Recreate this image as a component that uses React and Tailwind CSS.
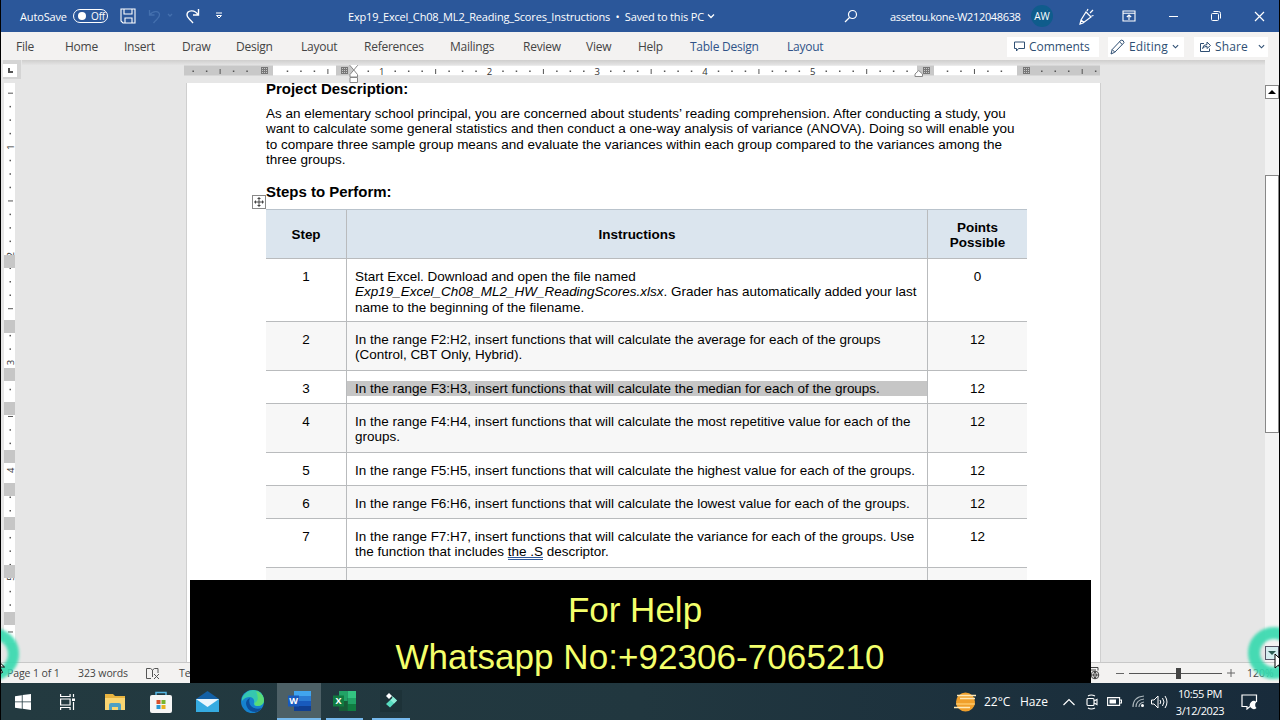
import React from "react";

const T = "whitespace-nowrap leading-none";

const Row = ({ n, pts, h, alt, children }) => (
  <div className={`grid grid-cols-[81px_581px_99px] border-b border-[#b9bbbd] text-[13.47px] leading-[15.45px] ${h} ${alt ? "bg-[#f7f7f7]" : "bg-white"}`}>
    <div className="border-r border-[#b9bbbd] pt-[9.6px] text-center">{n}</div>
    <div className="border-r border-[#b9bbbd] pt-[9.6px] whitespace-nowrap">{children}</div>
    <div className="pt-[9.6px] text-center">{pts}</div>
  </div>
);

const Line = ({ children }) => <div className="pl-[8px]">{children}</div>;

function HRuler() {
  const marks = [];
  for (let k = -6; k <= 61; k++) {
    const x = 274 + k * 13.47 - 184;
    if ([-1, 0, 5, 6, 48, 49, 55, 56].includes(k)) continue;
    if (k % 8 === 0)
      marks.push(<text key={k} x={x} y="9.5" fontSize="9.5" textAnchor="middle" fill="#333" fontFamily="Open Sans">{k / 8}</text>);
    else if (((k % 8) + 8) % 8 === 4) marks.push(<rect key={k} x={x - 0.5} y="4" width="1" height="5" fill="#555" />);
    else marks.push(<rect key={k} x={x - 0.75} y="5.5" width="1.5" height="1.5" fill="#555" />);
  }
  const hatch = (x) => (
    <g key={x} stroke="#777" strokeWidth="1">
      <path d={`M${x} 2.5h7M${x} 4.5h7M${x} 6.5h7M${x} 8.5h7M${x + 0.5} 2v7M${x + 2.5} 2v7M${x + 4.5} 2v7M${x + 6.5} 2v7`} />
    </g>
  );
  return (
    <svg width="916" height="19" viewBox="0 0 916 19" className="block">
      <rect width="916" height="10" fill="#c8c8c8" y="0.5" />
      <rect x="89" width="63" height="10" y="0.5" fill="#fff" />
      <rect x="169" width="564" height="10" y="0.5" fill="#fff" />
      <rect x="750" width="83" height="10" y="0.5" fill="#fff" />
      {marks}
      {hatch(77)}
      {hatch(157)}
      {hatch(739)}
      {hatch(839)}
      <g fill="#fff" stroke="#888">
        <path d="M166 -1.500h7.500v2l-3.700 4.500l-3.800-4.500z" />
        <path d="M166 12v-2.500l3.800-4.500l3.700 4.500v2.500zM166 12.500h7.500v5h-7.500z" />
        <path d="M731 11.500v-2.500l3.700-3.500l3.800 3.500v2.500z" />
      </g>
    </svg>
  );
}

function VRuler() {
  const marks = [];
  for (let k = 4; k <= 44; k++) {
    const y = 39.3 + k * 13.47 - 83;
    if (k % 8 === 0)
      marks.push(<text key={k} transform={`translate(9.500 ${y}) rotate(-90)`} fontSize="9.5" textAnchor="middle" fill="#333" fontFamily="Open Sans">{k / 8}</text>);
    else if (k % 8 === 4) marks.push(<rect key={k} x="4" y={y - 0.5} width="5" height="1" fill="#555" />);
    else marks.push(<rect key={k} x="5.500" y={y - 0.75} width="1.500" height="1.500" fill="#555" />);
  }
  return (
    <svg width="11" height="560" viewBox="0 0 11 560" className="block">
      <rect width="11" height="560" fill="#fff" />
      {marks}
      {[255, 320, 368, 402, 450, 483, 517, 565, 612].map((y) => (
        <rect key={y} y={y - 83} width="11" height="13" fill="#c6c6c6" />
      ))}
    </svg>
  );
}

const Chev = ({ c = "#fff", s = 8 }) => (
  <svg width={s} height={s} viewBox="0 0 8 8" fill="none" stroke={c} strokeWidth="1.300"><path d="M1 2.500l3 3l3-3" /></svg>
);

const Cursor = () => (
  <svg width="14" height="19" viewBox="0 0 14 19" className="block"><path d="M1 1v14l3.500-3l2.500 5.500l2.500-1l-2.500-5.500h4.500z" fill="#fff" stroke="#000" /></svg>
);

const tabs = [
  ["File", "w-[18px] ml-[15px]"], ["Home", "w-[33px] ml-[31px]"], ["Insert", "w-[31px] ml-[26px]"], ["Draw", "w-[28px] ml-[27px]"],
  ["Design", "w-[37px] ml-[26px]"], ["Layout", "w-[36px] ml-[28px]"], ["References", "w-[60px] ml-[27px]"], ["Mailings", "w-[46px] ml-[26px]"],
  ["Review", "w-[38px] ml-[27px]"], ["View", "w-[25px] ml-[25px]"], ["Help", "w-[25px] ml-[27px]"],
  ["Table Design", "w-[70px] ml-[27px] text-[#2f5288]"], ["Layout", "w-[36px] ml-[27px] text-[#2f5288]"],
];

export default function App() {
  return (
    <div className="relative flex h-[720px] w-[1280px] flex-col overflow-hidden border-x border-black bg-[#e6e6e6] font-['Open_Sans',sans-serif] text-[#444]">
      <header className="flex h-8 shrink-0 items-center bg-[#2b579a] text-[11px] tracking-[-0.15px] text-white">
        <span className={`ml-[19px] w-[53px] ${T}`}>AutoSave</span>
        <span className="flex h-[14px] w-[35px] items-center gap-[5px] rounded-full border border-white pl-1 text-[10px] leading-none">
          <i className="block size-2 rounded-full bg-white" />Off
        </span>
        <svg className="ml-[12px]" width="16" height="16" viewBox="0 0 16 16" fill="none" stroke="#fff" strokeWidth="1.100"><path d="M1 1h14v14h-12l-2-2zM4 1v5h8v-5M5 15v-5h7v5" /></svg>
        <svg className="ml-[12px]" width="28" height="16" viewBox="0 0 28 16" fill="none" stroke="#4470ae" strokeWidth="1.300"><path d="M1.500 2v5h5M1.500 7c4-5 10-4 10 0c0 3-3 4-6 8M20 6l2 2l2-2" /></svg>
        <svg className="ml-[9px]" width="15" height="16" viewBox="0 0 15 16" fill="none" stroke="#fff" strokeWidth="1.400"><path d="M13.500 1v6h-5.500M13 7c-3-6-11-5-11 0c0 3 3 4 6 8" /></svg>
        <svg className="ml-[15px]" width="8" height="8" viewBox="0 0 8 8" fill="none" stroke="#fff"><path d="M1 1h6M1.500 3.500l2.500 2.500l2.500-2.500z" /></svg>
        <span className={`ml-[125px] w-[359px] tracking-[-0.17px] ${T}`}>Exp19_Excel_Ch08_ML2_Reading_Scores_Instructions&nbsp; •&nbsp; Saved to this PC</span>
        <Chev />
        <svg className="ml-[129px]" width="14" height="14" viewBox="0 0 14 14" fill="none" stroke="#fff" strokeWidth="1.200"><circle cx="8.500" cy="5.500" r="4" /><path d="M5.500 8.500l-4.500 4.500" /></svg>
        <span className={`ml-[32px] w-[131px] tracking-[-0.35px] ${T}`}>assetou.kone-W212048638</span>
        <span className="ml-[10px] flex size-[22px] items-center justify-center rounded-full bg-[#0f5c8c] text-[10px]">AW</span>
        <svg className="ml-[25px]" width="17" height="17" viewBox="0 0 17 17" fill="none" stroke="#fff" strokeWidth="1.200"><path d="M8 4l5 5l-8 6l-3 1l1-4zM3 12l3 2.500M9 3l1-2M12 5l3-3M13.500 8l2-.5" /></svg>
        <svg className="ml-[27px]" width="14" height="12" viewBox="0 0 14 12" fill="none" stroke="#fff" strokeWidth="1.100"><path d="M1 1h12v10h-12zM1 3.200h12M7 10v-5M4.800 7l2.200-2l2.200 2" /></svg>
        <i className="ml-[33px] block h-px w-[9px] bg-white" />
        <svg className="ml-[33px]" width="10" height="10" viewBox="0 0 10 10" fill="none" stroke="#fff"><rect x=".5" y="2.500" width="7" height="7" rx="1" /><path d="M2.500 .5h5q2 0 2 2v5" /></svg>
        <svg className="ml-[33px]" width="11" height="11" viewBox="0 0 11 11" stroke="#fff" strokeWidth="1.200"><path d="M1 1l9 9M10 1l-9 9" /></svg>
      </header>

      <nav className="flex h-7 shrink-0 items-center bg-[#f3f2f1] pt-px text-[12px] tracking-[-0.25px]">
        {tabs.map(([t, c], i) => <span key={i} className={`${T} ${c}`}>{t}</span>)}
        <button className="ml-[184px] flex h-5 w-[92px] items-center gap-1 bg-white pl-[7px] text-[12px] text-[#2f4f73]">
          <svg width="11" height="11" viewBox="0 0 11 11" fill="none" stroke="currentColor"><path d="M.5 1h10v6.500h-6l-2 2.500v-2.500h-2z" /></svg>
          <span className={`tracking-[-0.05px] ${T}`}>Comments</span>
        </button>
        <button className="ml-[9px] flex h-5 w-[76px] items-center gap-[4px] bg-white pl-[2px] text-[12px] text-[#2f4f73]">
          <svg width="15" height="16" viewBox="0 0 15 16" fill="none" stroke="currentColor"><path d="M1 15l1.200-4.500l9-9.500q2.500 0 2.800 2.700l-9.200 9.500zM9.500 2.800l2.800 2.700M2.200 10.500l2.600 2.700" /></svg>
          <span className={`tracking-[0.1px] ${T}`}>Editing</span><Chev c="#2f4f73" s={7} />
        </button>
        <button className="ml-[10px] flex h-5 w-[74px] items-center gap-1 bg-white pl-[6px] text-[12px] text-[#2f4f73]">
          <svg width="11" height="11" viewBox="0 0 11 11" fill="none" stroke="currentColor"><path d="M4 2.500h-3.500v8h9v-3M2.500 7.500q.5-4 4.500-4v-2.500l3.500 3.500l-3.500 3v-2.200q-2.500 0-4.500 2.200z" /></svg>
          <span className={`tracking-[0.1px] ${T}`}>Share</span><span className="ml-[6px] flex"><Chev c="#2f4f73" s={7} /></span>
        </button>
      </nav>

      <main className="flex h-[602px] shrink-0">
        <div className="flex w-[21px] shrink-0 flex-col pl-[2px]">
          <div className="mb-[4px] h-[19px] w-[18px] bg-[#d4d4d4] pt-[4px]">
            <div className="flex h-[13px] w-[14px] items-center justify-center bg-white"><i className="block h-[5px] w-[5px] border-b-2 border-l-2 border-[#555]" /></div>
          </div>
          <div className="pl-[1px]"><VRuler /></div>
        </div>
        <div className="flex flex-1 flex-col">
          <div className="h-[5px] shrink-0 bg-gradient-to-b from-[#cfcecd] to-[#e4e4e4]" />
          <div className="h-[18px] shrink-0 pl-[162px]"><HRuler /></div>
          <article className="ml-[164px] w-[915px] flex-1 overflow-hidden border-x border-[#cfcfcf] bg-white pl-[79px] font-['Liberation_Sans',Arial,sans-serif] text-black">
            <h2 className="-mt-[3px] h-[26px] text-[14.97px] font-bold leading-[17px]">Project Description:</h2>
            <div className="h-[76px] whitespace-nowrap text-[13.49px] leading-[15.4px]">
              <div>As an elementary school principal, you are concerned about students’ reading comprehension. After conducting a study, you</div>
              <div>want to calculate some general statistics and then conduct a one-way analysis of variance (ANOVA). Doing so will enable you</div>
              <div>to compare three sample group means and evaluate the variances within each group compared to the variances among the</div>
              <div>three groups.</div>
            </div>
            <h2 className="relative h-[27px] text-[14.97px] font-bold leading-[19px]">
              Steps to Perform:
              <span className="absolute -left-[14px] top-[13px] flex size-[14px] items-center justify-center border border-[#888] bg-white">
                <svg width="10" height="10" viewBox="0 0 10 10" fill="none" stroke="#444"><path d="M5 0v10M0 5h10M3.500 1.500h3M3.500 8.500h3M1.500 3.500v3M8.500 3.500v3" /></svg>
              </span>
            </h2>
            <div className="w-[761px] border-t border-[#b9c3cc]">
              <div className="grid h-[49px] grid-cols-[81px_581px_99px] items-stretch border-b border-[#b9bbbd] bg-[#dbe5ee] text-center text-[13.47px] font-bold leading-[15.4px]">
                <div className="flex items-center justify-center border-r border-[#b9bbbd] pt-[2px]">Step</div>
                <div className="flex items-center justify-center border-r border-[#b9bbbd] pt-[2px]">Instructions</div>
                <div className="flex items-center justify-center pt-[2px]">Points<br />Possible</div>
              </div>
              <Row n="1" pts="0" h="h-[63px]"><Line>Start Excel. Download and open the file named</Line><Line><i>Exp19_Excel_Ch08_ML2_HW_ReadingScores.xlsx</i>. Grader has automatically added your last</Line><Line>name to the beginning of the filename.</Line></Row>
              <Row n="2" pts="12" h="h-[49px]" alt><Line>In the range F2:H2, insert functions that will calculate the average for each of the groups</Line><Line>(Control, CBT Only, Hybrid).</Line></Row>
              <Row n="3" pts="12" h="h-[33px]"><div className="h-[15px] bg-[#c6c6c6]"><Line>In the range F3:H3, insert functions that will calculate the median for each of the groups.</Line></div></Row>
              <Row n="4" pts="12" h="h-[49px]" alt><Line>In the range F4:H4, insert functions that will calculate the most repetitive value for each of the</Line><Line>groups.</Line></Row>
              <Row n="5" pts="12" h="h-[33px]"><Line>In the range F5:H5, insert functions that will calculate the highest value for each of the groups.</Line></Row>
              <Row n="6" pts="12" h="h-[33px]" alt><Line>In the range F6:H6, insert functions that will calculate the lowest value for each of the groups.</Line></Row>
              <Row n="7" pts="12" h="h-[49px]"><Line>In the range F7:H7, insert functions that will calculate the variance for each of the groups. Use</Line><Line>the function that includes <span className="border-b border-[#2b579a] underline decoration-[#2b579a]">the .S</span> descriptor.</Line></Row>
              <Row h="h-[49px]" alt />
            </div>
          </article>
        </div>
        <div className="flex w-[14px] shrink-0 flex-col bg-[#f3f3f3] pt-[25px]">
          <div className="flex h-[14px] items-center justify-center border border-[#888] bg-white"><i className="block border-x-[4px] border-b-[4px] border-x-transparent border-b-black" /></div>
          <div className="mt-[76px] h-[258px] border border-[#888] bg-white" />
          <div className="mt-[213px] flex h-[14px] items-center justify-center border border-[#556] bg-[#d5eef0]"><i className="block border-x-[4px] border-t-[4px] border-x-transparent border-t-[#2b5a52]" /></div>
        </div>
      </main>

      <footer className="flex h-[21px] shrink-0 items-center border-t border-[#c8c8c8] bg-[#f3f2f1] text-[10.5px]">
        <span className={`ml-[6px] w-[53px] tracking-[-0.1px] ${T}`}>Page 1 of 1</span>
        <span className={`ml-[18px] w-[51px] tracking-[-0.1px] ${T}`}>323 words</span>
        <svg className="ml-[17px]" width="14" height="13" viewBox="0 0 14 13" fill="none" stroke="#555"><path d="M5 11.500h-4.500v-10h4l2 1.500l2-1.500h3.500v4.500M6.500 3v7M8 7l5 5M13 7l-5 5" /></svg>
        <span className={`ml-[19px] w-[60px] ${T}`}>Text</span>
        <svg className="ml-[851px]" width="10" height="14" viewBox="0 0 10 14" fill="none" stroke="#444"><path d="M0 1.500h8v3M0 4h6" /><circle cx="5" cy="9" r="3.800" /><path d="M1.200 9h7.600M5 5.200q-3 3.800 0 7.600q3-3.800 0-7.600" /></svg>
        <i className="ml-[16px] block h-px w-[8px] bg-[#666]" />
        <span className="ml-[5px] flex h-[11px] w-[93px] items-center"><i className="block h-px w-[47px] bg-[#555]" /><i className="block h-[11px] w-[5px] bg-[#444]" /><i className="block h-px flex-1 bg-[#555]" /></span>
        <svg className="ml-[5px]" width="8" height="8" viewBox="0 0 8 8" stroke="#666"><path d="M0 4h8M4 0v8" /></svg>
        <span className={`ml-[12px] ${T}`}>120%</span>
      </footer>

      <div className="flex h-[37px] shrink-0 items-center bg-gradient-to-r from-[#233a40] via-[#21373f] to-[#182b3b] text-[12px] text-white">
        <svg className="ml-[14px]" width="16" height="16" viewBox="0 0 16 16" fill="#fff"><path d="M0 2.200l6.800-1v6.300h-6.800zM7.600 1.100l8.400-1.100v7.500h-8.400zM0 8.300h6.800v6.400l-6.800-1zM7.600 8.300h8.400v7.700l-8.400-1.200z" /></svg>
        <svg className="ml-[29px]" width="16" height="16" viewBox="0 0 16 16" fill="none" stroke="#fff" strokeWidth="1.200"><path d="M.6 0v2.500h9.500v-2.500M.6 5h9.500v6h-9.500zM.6 16v-2.500h9.500v2.500M13.500 0v3M13.500 8v8" /><path d="M12 4.500h3v2.500h-3z" fill="#fff" stroke="none" /></svg>
        <svg className="ml-[29px]" width="21" height="18" viewBox="0 0 21 18"><path d="M0 1h8l2 2h10v14h-20z" fill="#e8b440" /><path d="M0 5h20v12h-20z" fill="#fad571" /><path d="M4 17v-5q0-2 2-2h8q2 0 2 2v5h-3v-3h-6v3z" fill="#4e9fc4" /></svg>
        <svg className="ml-[24px]" width="22" height="22" viewBox="0 0 22 22"><path d="M6 6v-4.500h10v4.500" fill="none" stroke="#55b7e4" strokeWidth="1.500" /><rect y="4" width="22" height="18" rx="2" fill="#f5f5f5" /><path d="M6.500 9h4v4h-4z" fill="#d8502c" /><path d="M11.500 9h4v4h-4z" fill="#79b52c" /><path d="M6.500 14h4v4h-4z" fill="#2897d4" /><path d="M11.500 14h4v4h-4z" fill="#e9b220" /></svg>
        <svg className="ml-[24px]" width="23" height="21" viewBox="0 0 23 21"><path d="M0 8l11.500-8l11.500 8v3h-23z" fill="#1360a5" /><path d="M0 8h23v13h-23z" fill="#35abe1" /><path d="M0 8h23l-11.500 8z" fill="#eaf6fd" /></svg>
        <svg className="ml-[22px]" width="23" height="23" viewBox="0 0 23 23"><circle cx="11.500" cy="11.500" r="11.500" fill="#1582cf" /><path d="M1 8q4-8 11-8q10 0 11 10q0 6-7 6q-4 0-3-3q1-5-4-6q-5 0-8 4z" fill="#36c7b0" /><path d="M15 1q8 3 8 10q-1 5-7 5q-3-1-2-3q5-3 1-12z" fill="#5bdc76" /><path d="M9 8q-6 3-3 9q2 5 9 5q4-1 6-4q-7 2-11-2q-3-4-1-8z" fill="#0d4f9b" /></svg>
        <div className="ml-[13px] flex h-full w-[44px] items-center justify-center border-b-2 border-[#76b9ed] bg-[#4d6066]">
          <svg width="23" height="20" viewBox="0 0 23 20"><path d="M6 0h17v5h-17z" fill="#41a5ee" /><path d="M6 5h17v5h-17z" fill="#2b7cd3" /><path d="M6 10h17v5h-17z" fill="#185abd" /><path d="M6 15h17v5h-17z" fill="#103f91" /><rect y="4.500" width="11" height="11" fill="#185abd" /><text x="5.500" y="13.200" fontSize="9" fontWeight="700" textAnchor="middle" fill="#fff" fontFamily="Open Sans">W</text></svg>
        </div>
        <div className="ml-[5px] flex h-full w-[37px] items-center justify-center border-b-2 border-[#76b9ed]">
          <svg width="23" height="20" viewBox="0 0 23 20"><path d="M6 0h8.500v10h-8.500z" fill="#21a366" /><path d="M14.500 0h8.500v7h-8.500z" fill="#33c481" /><path d="M14.500 7h8.500v6h-8.500z" fill="#21a366" /><path d="M6 10h8.500v10h-8.500z" fill="#185c37" /><path d="M14.500 13h8.500v7h-8.500z" fill="#107c41" /><rect y="4.500" width="11" height="11" fill="#107c41" /><text x="5.500" y="13.200" fontSize="9" fontWeight="700" textAnchor="middle" fill="#fff" fontFamily="Open Sans">X</text></svg>
        </div>
        <div className="ml-[9px] flex h-full w-[38px] items-center justify-center border-b-2 border-[#76b9ed]">
          <span className="flex size-[22px] items-center justify-center bg-[#1d3238]"><svg width="13" height="15" viewBox="0 0 13 15"><path d="M4 0l3 3l-3 3l-3-3z" fill="#fff" /><path d="M8.500 4l3.500 3.500l-7 7l-4-3.500z" fill="#58dcc0" /><path d="M6.500 2.500l5.500 5l-3 3l-3.500-3.500l2-2z" fill="#8fecd6" /></svg></span>
        </div>
        <svg className="ml-[544px]" width="23" height="20" viewBox="0 0 23 20"><circle cx="11.500" cy="10" r="9.500" fill="#f0a02c" /><path d="M3 3.500h19M6 6.500h15M0 15.500h16" stroke="#ffe9b8" strokeWidth="1.400" /><path d="M2 12h19" stroke="#ffd073" strokeWidth="1.300" /></svg>
        <span className={`ml-[7px] w-[28px] ${T}`}>22°C</span>
        <span className={`ml-[8px] w-[28px] ${T}`}>Haze</span>
        <svg className="ml-[15px]" width="12" height="8" viewBox="0 0 12 8" fill="none" stroke="#fff" strokeWidth="1.200"><path d="M.5 7l5.500-5.500l5.500 5.500" /></svg>
        <svg className="ml-[11px]" width="12" height="16" viewBox="0 0 12 16" fill="none" stroke="#fff" strokeWidth="1.100"><rect x="1" y="4.500" width="7" height="7" rx="1" /><path d="M8 7l3-1.500v5l-3-1.500M2 2q3-2 7 0M2 14q3 2 7 0" /></svg>
        <svg className="ml-[9px]" width="15" height="9" viewBox="0 0 15 9" fill="none" stroke="#fff" strokeWidth="1.100"><path d="M.6.600h12v7.800h-12zM13 3h1.500v3h-1.500" /><path d="M2.500 2.500h6.500v4h-6.500z" fill="#fff" stroke="none" /></svg>
        <svg className="ml-[10px]" width="13" height="13" viewBox="0 0 13 13" fill="none" stroke="#aab5bb" strokeWidth="1.200"><path d="M1 12q0-10 11-11M4 12q0-7 8-8M7 12q0-4 5-5" /><circle cx="10.500" cy="10.500" r="1.500" fill="#fff" stroke="none" /></svg>
        <svg className="ml-[6px]" width="17" height="14" viewBox="0 0 17 14" fill="none" stroke="#fff"><path d="M.5 5h2.500l4-4v12l-4-4h-2.500zM9 5q1.500 2 0 4M11.500 3q3 4 0 8M14 1q4 6 0 12" /></svg>
        <div className="ml-[7px] flex w-[50px] flex-col items-center gap-[6px] text-[11px] tracking-[-0.4px]"><span className={T}>10:55 PM</span><span className={T}>3/12/2023</span></div>
        <svg className="ml-[16px]" width="17" height="16" viewBox="0 0 17 16" fill="none" stroke="#fff" strokeWidth="1.200"><path d="M9 12.500l-3 2.500v-2.500h-5v-11.500h14.500v7" /><path d="M15.500 8a4 4 0 1 0 0 6a4 4 0 0 1 0-6z" fill="#fff" stroke="none" /></svg>
      </div>

      <div className="absolute left-[189px] top-[580px] flex h-[103px] w-[901px] flex-col bg-black text-center font-['Liberation_Sans',Arial,sans-serif] text-[35px] leading-[47px] text-[#f3ff6b]">
        <div className="mt-[6px] pr-[11px]">For Help</div>
        <div className="whitespace-nowrap pr-[1px] tracking-[0.06px]">Whatsapp No:+92306-7065210</div>
      </div>

      <div className="absolute -left-[34px] top-[628px] size-[52px] rounded-full border-[11px] border-[#35d9ae] opacity-90 blur-[1.5px]" />
      <div className="absolute -left-[8px] top-[656px]"><Cursor /></div>
      <div className="absolute left-[1247px] top-[627px] size-[52px] rounded-full border-[12px] border-[#35d9ae] opacity-90 blur-[1.5px]" />
      <div className="absolute left-[1273px] top-[653px]"><Cursor /></div>
    </div>
  );
}
